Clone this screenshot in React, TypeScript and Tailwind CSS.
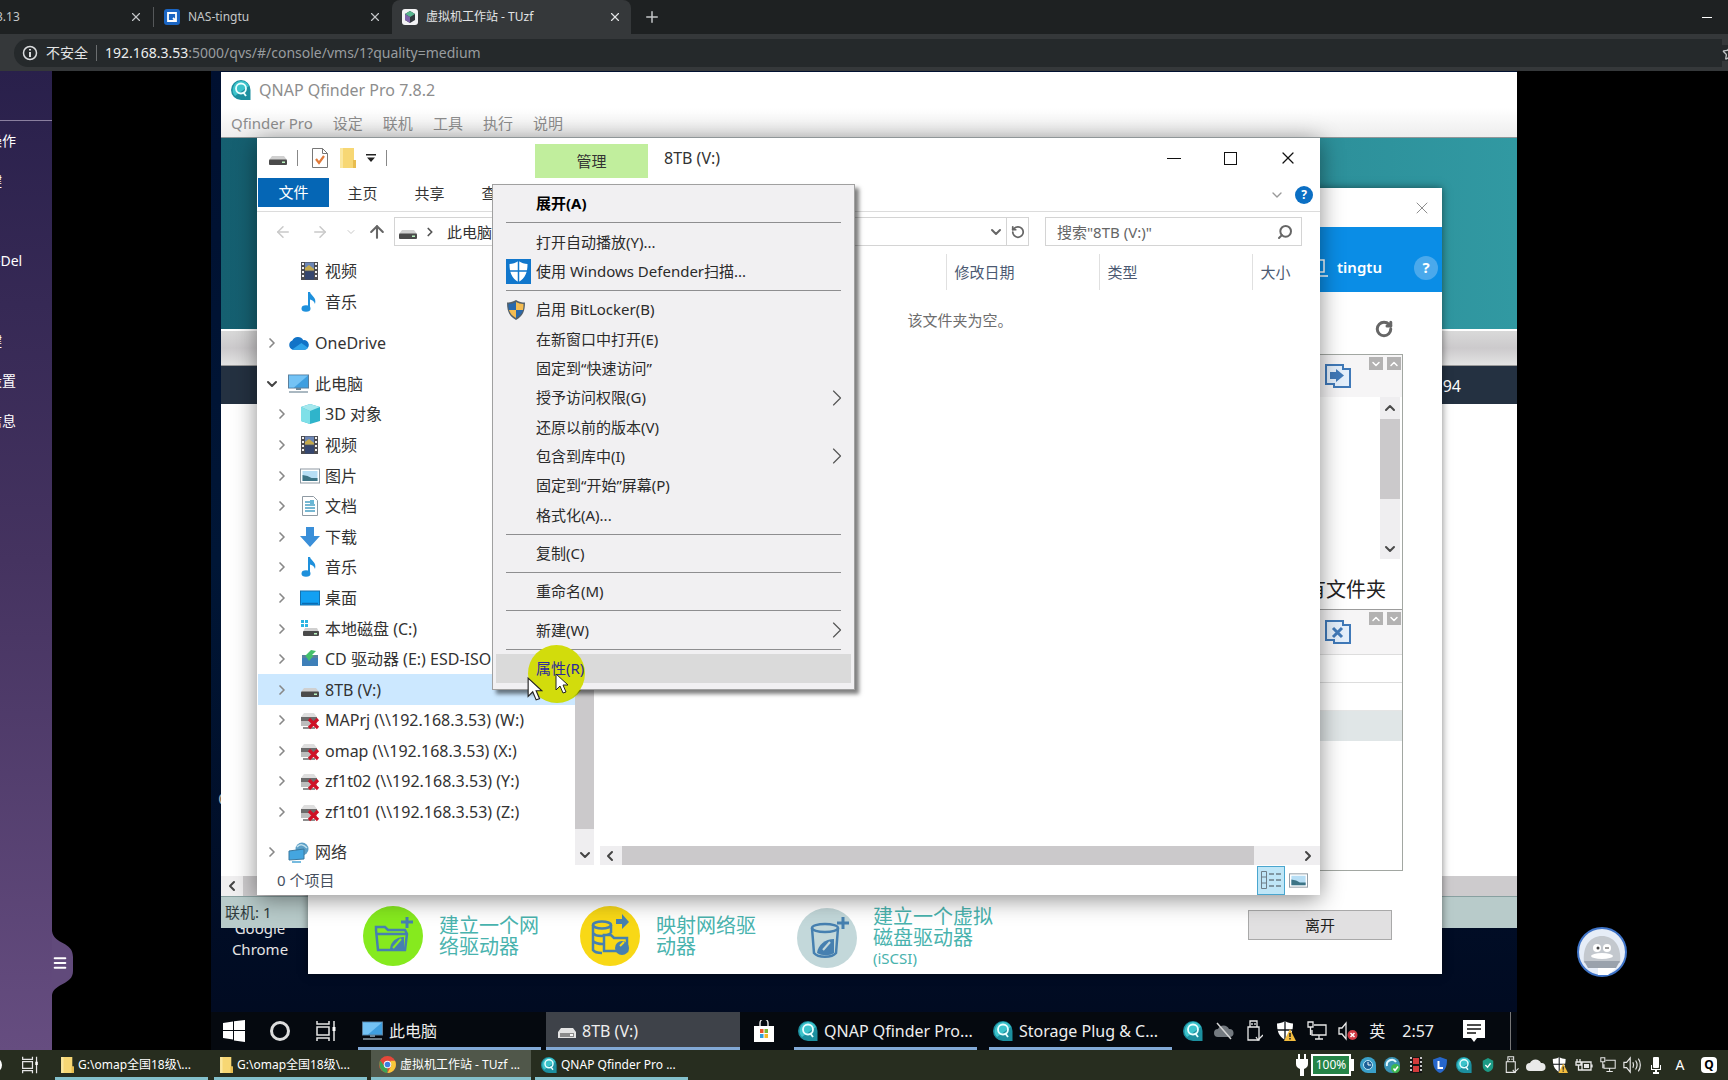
import React from "react";
import {
  ArrowLeft,
  ArrowRight,
  ArrowUp,
  ChevronDown,
  ChevronLeft,
  ChevronRight,
  ChevronUp,
  Menu,
  Plus,
  RotateCw,
  Search,
  Star,
  X,
} from "lucide-react";

type IconProps = { className?: string };

const QIcon = ({ className = "size-5" }: IconProps) => (
  <svg viewBox="0 0 20 20" className={className}>
    <path d="M10 0a10 10 0 0 1 9.500 10V20H10A10 10 0 0 1 10 0z" fill="#1c8f9f" />
    <path d="M10 1a9 9 0 0 1 8 5L4 16A9 9 0 0 1 10 1z" fill="#3cc3cb" />
    <circle cx="10" cy="8.500" r="5" fill="none" stroke="#eaffff" strokeWidth="1.800" />
    <path d="M12 12l3 4" stroke="#eaffff" strokeWidth="1.800" />
  </svg>
);

const DriveIcon = ({ className = "w-[18px] h-[18px]" }: IconProps) => (
  <svg viewBox="0 0 18 18" className={className}>
    <path d="M3 7h12l3 4H0z" fill="#d0d0d0" />
    <rect y="10.500" width="18" height="5.500" rx="1" fill="#4a4a4a" />
    <rect x="13" y="12.500" width="3" height="1.500" fill="#b9f5c0" />
  </svg>
);

const TaskDriveIcon = () => (
  <svg viewBox="0 0 18 18" className="size-[18px]">
    <path d="M3 6h12l3 4v6H0v-6z" fill="#e3e3e3" />
    <path d="M2 11h14v4H2z" fill="#8b8b8b" />
    <path d="M12 12h3v2h-3z" fill="#f5f5f5" />
  </svg>
);

const NetDriveIcon = () => (
  <svg viewBox="0 0 20 20" className="size-5">
    <path d="M4 3h10l3 4H1z" fill="#dedede" />
    <rect x="1" y="7" width="16" height="4" fill="#6b6b6b" />
    <rect x="1" y="11" width="16" height="5" fill="#bdbdbd" />
    <path d="M3 18h12" stroke="#8d8d8d" strokeWidth="2" />
    <path d="M9 9l9 9M18 9l-9 9" stroke="#cf1126" strokeWidth="3.200" />
  </svg>
);

const SystemDriveIcon = () => (
  <svg viewBox="0 0 20 20" className="size-5">
    <path d="M1 1h3v3H1zM5 1h3v3H5zM1 5h3v3H1zM5 5h3v3H5z" fill="#2bb5e3" />
    <path d="M5 9h12l2 4H3z" fill="#d0d0d0" />
    <rect x="3" y="12" width="16" height="5" rx="1" fill="#4a4a4a" />
    <rect x="14" y="14" width="3" height="1.500" fill="#b9f5c0" />
  </svg>
);

const CdIcon = () => (
  <svg viewBox="0 0 20 20" className="size-5">
    <rect x="2" y="6" width="16" height="11" fill="#3e7fb8" />
    <rect x="2" y="6" width="16" height="3" fill="#5b7fa0" />
    <path d="M6 6l5-5 5 1-4 4h2l-5 6-4-6z" fill="#43c06b" />
  </svg>
);

const VideoIcon = () => (
  <svg viewBox="0 0 20 20" className="size-5">
    <rect x="1" y="1" width="17" height="18" fill="#4c4c50" />
    <rect x="5" y="1.500" width="9" height="8" fill="#6c86b6" />
    <rect x="5" y="10.500" width="9" height="8" fill="#35466e" />
    <path d="M5 7l4-3 5 4v1.500H5z" fill="#c4a94b" />
    <path d="M3 2v16M16 2v16" stroke="#f2f2f2" strokeWidth="2" strokeDasharray="2 2" />
  </svg>
);

const MusicIcon = () => (
  <svg viewBox="0 0 20 20" className="size-5">
    <ellipse cx="6" cy="16.500" rx="4.500" ry="3.200" fill="#1e90dc" />
    <path d="M8 17V0h2c1 4 7 5 5 12-1-3-3-4-5-4.500V17z" fill="#1e90dc" />
  </svg>
);

const CloudIcon = ({ className = "w-[21px] h-[16px]" }: IconProps) => (
  <svg viewBox="0 0 22 16" className={className}>
    <path d="M5 15a5 5 0 0 1-.5-9.500A6.500 6.500 0 0 1 16 5a5 5 0 0 1 1.500 10z" fill="#1173c7" />
    <path d="M4 15L14 8l7 5a4 4 0 0 1-3 2z" fill="#2fa4ea" />
  </svg>
);

const PcIcon = ({ className = "size-[21px]" }: IconProps) => (
  <svg viewBox="0 0 21 21" className={className}>
    <rect x=".5" y="2" width="20" height="13" fill="#3f9fe0" stroke="#5b7f9c" />
    <path d="M1 2.500h19L6 14.500H1z" fill="#74c3f5" />
    <path d="M8 15h5v2H8z" fill="#6d8799" />
    <path d="M1 19h19" stroke="#8ea0ac" strokeWidth="1.500" />
  </svg>
);

const CubeIcon = () => (
  <svg viewBox="0 0 20 20" className="size-5">
    <path d="M10 0l10 3v14l-10 3-9-3V3z" fill="#2fb4cb" />
    <path d="M1 3l9 4v13l-9-3z" fill="#7fe0e8" />
    <path d="M10 0l10 3-10 4-9-4z" fill="#a5e8ee" />
  </svg>
);

const PictureIcon = ({ className = "size-5" }: IconProps) => (
  <svg viewBox="0 0 20 20" className={className}>
    <rect x=".5" y="3" width="19" height="14" fill="#fff" stroke="#8f9aa3" />
    <rect x="2.500" y="5" width="15" height="10" fill="#b7def5" />
    <path d="M2.500 9l5 1 4 2h6v3h-15z" fill="#3d7486" />
  </svg>
);

const DocIcon = () => (
  <svg viewBox="0 0 20 20" className="size-5">
    <path d="M2.500.5h11l4 4v15h-15z" fill="#fff" stroke="#8f9aa3" />
    <path d="M5 6h6M5 9h10M5 12h10M5 15h10" stroke="#4aa0c4" strokeWidth="1.500" />
    <rect x="10" y="4" width="4" height="4" fill="#69b7d6" />
  </svg>
);

const DownIcon = () => (
  <svg viewBox="0 0 20 20" className="size-5">
    <path d="M6 0h8v9h6L10 20 0 9h6z" fill="#3a8fd9" />
  </svg>
);

const DesktopIcon = () => (
  <svg viewBox="0 0 20 20" className="size-5">
    <rect x=".5" y="3" width="19" height="14" fill="#12a0f2" stroke="#1671ad" />
    <path d="M2 15.500h16" stroke="#0b6cb3" strokeWidth="1.500" />
  </svg>
);

const NetworkIcon = () => (
  <svg viewBox="0 0 21 21" className="size-[21px]">
    <circle cx="14" cy="7" r="6.500" fill="#5c9fc6" />
    <path d="M9 5c3-4 7-2 10 1" stroke="#bfe0ee" strokeWidth="1.500" fill="none" />
    <path d="M1 9l15-2v10l-15 1z" fill="#44a6e0" stroke="#3b789e" />
    <path d="M4 20h9" stroke="#4aa4d5" strokeWidth="1.500" />
  </svg>
);

const FolderIcon = ({ className = "w-[16px] h-[20px]" }: IconProps) => (
  <svg viewBox="0 0 16 20" className={className}>
    <path d="M0 0h14v12h2v8H0z" fill="#f7d774" />
    <path d="M0 0h3v20H0z" fill="#fbe79e" />
    <path d="M13 12h3v8h-3z" fill="#e8bd4f" />
  </svg>
);

const CheckDocIcon = () => (
  <svg viewBox="0 0 16 20" className="w-4 h-5">
    <path d="M.5.500h10l5 5v14H.5z" fill="#fff" stroke="#777" />
    <path d="M10.500.500v5h5" fill="none" stroke="#777" />
    <path d="M4 11l3 4 5-7" fill="none" stroke="#e07a3a" strokeWidth="2.200" />
  </svg>
);

const DefenderIcon = () => (
  <svg viewBox="0 0 25 25" className="size-[25px]">
    <rect width="25" height="25" fill="#1177cc" />
    <path d="M12.500 2c3 2 6 3 9 3 0 8-2 14-9 18-7-4-9-10-9-18 3 0 6-1 9-3z" fill="#fff" />
    <path d="M12.500 2v21M3 12h19" stroke="#1177cc" strokeWidth="1.500" />
  </svg>
);

const BitlockerIcon = () => (
  <svg viewBox="0 0 20 20" className="size-5">
    <path d="M10 0c3 2 6 2.500 9 2.500C19 11 17 16 10 20 3 16 1 11 1 2.500 4 2.500 7 2 10 0z" fill="#53606b" />
    <path d="M10 2v8H3C2.500 8 2.500 6 2.500 4 5 4 8 3 10 2z" fill="#2968ab" />
    <path d="M10 2v8h7c.5-2 .5-4 .5-6C15 4 12 3 10 2z" fill="#f4bc52" />
    <path d="M10 10v8c-4-2-6-5-7-8z" fill="#f4bc52" />
    <path d="M10 10v8c4-2 6-5 7-8z" fill="#2968ab" />
  </svg>
);

const TaskViewIcon = ({ className = "size-[22px]" }: IconProps) => (
  <svg viewBox="0 0 22 22" className={className} fill="none" stroke="#e6e6e6" strokeWidth="1.500">
    <path d="M2 1v3h12V1M2 21v-3h12v3M2 7h12v8H2zM19 1v20" />
    <rect x="17.500" y="7" width="3" height="4" fill="#fff" stroke="none" />
  </svg>
);

const UsbIcon = ({ className = "w-4 h-[22px]" }: IconProps) => (
  <svg viewBox="0 0 16 22" className={className} fill="none" stroke="#e8e8e8" strokeWidth="1.300">
    <path d="M3 7V1h7v6M1 7h11v13H1zM5 3v2M8 3v2" />
    <path d="M9 17l2 3 5-5" />
  </svg>
);

const ShieldWarnIcon = ({ className = "size-5" }: IconProps) => (
  <svg viewBox="0 0 20 20" className={className}>
    <path d="M9 0c3 2 5 2 8 2.500 0 8-2 13-8 16.500C3 15.500 1 10.500 1 2.500 4 2 6 2 9 0z" fill="#fff" />
    <path d="M9 0v19M1 9h16" stroke="#10151a" strokeWidth="1.300" />
    <path d="M14 8l6 12H8z" fill="#f3bc3d" />
    <path d="M14 12v4M14 17v1.500" stroke="#222" strokeWidth="1.500" />
  </svg>
);

const LanIcon = ({ className = "size-5" }: IconProps) => (
  <svg viewBox="0 0 20 20" className={className} fill="none" stroke="#e8e8e8" strokeWidth="1.300">
    <path d="M7 4h12v10H5V9M12 14v4M8 18h8M1 1h5v5H1zM3.500 6v8" />
  </svg>
);

const SpeakerIcon = ({ muted = false }: { muted?: boolean }) => (
  <svg viewBox="0 0 20 20" className={muted ? "size-5" : "size-[18px]"} fill="none" stroke="#e8e8e8" strokeWidth="1.300">
    <path d="M1 7h3l4-5v16l-4-5H1z" />
    {muted ? (
      <>
        <circle cx="14.500" cy="14" r="5" fill="#cf3b45" stroke="none" />
        <path d="M12.500 12l4 4M16.500 12l-4 4" stroke="#fff" strokeWidth="1.500" />
      </>
    ) : (
      <path d="M11 7c1 2 1 4 0 6M14 5c2 3 2 7 0 10M17 3c3 4 3 10 0 14" />
    )}
  </svg>
);

const GreyCloudIcon = ({ off = false }: { off?: boolean }) => (
  <svg viewBox="0 0 20 18" className="w-5 h-[18px]">
    <path
      d="M4 15a4 4 0 0 1 0-8 6 6 0 0 1 11 0 4 4 0 0 1 1 8z"
      fill={off ? "#747a80" : "#e9e9e9"}
    />
    {off && <path d="M3 1l14 16" stroke="#d5d5d5" strokeWidth="1.500" />}
  </svg>
);

const ChromeIcon = () => (
  <svg viewBox="0 0 18 18" className="size-[17px]">
    <circle cx="9" cy="9" r="9" fill="#e4483a" />
    <path d="M1 5l6 11a9 9 0 0 1-6-11z" fill="#3da455" />
    <path d="M9 18A9 9 0 0 1 1.500 5L6 11l3 2z" fill="#3da455" />
    <path d="M17 5a9 9 0 0 1-8 13l4-8-1-5z" fill="#f6c83b" />
    <circle cx="9" cy="9" r="4" fill="#fff" />
    <circle cx="9" cy="9" r="3" fill="#3f7fe0" />
  </svg>
);

const PointerIcon = ({ className = "" }: IconProps) => (
  <svg viewBox="0 0 14 21" className={className}>
    <path d="M1 1v16l4-4 3 7 3-1-3-7h5z" fill="#fff" stroke="#222" strokeWidth="1" />
  </svg>
);

// folder sync glyphs in the storage window
const FrameIcon = ({ kind }: { kind: "arrow" | "cross" }) => (
  <svg viewBox="0 0 26 24" className="w-[26px] h-6" fill="none" stroke="#4079b8" strokeWidth="2">
    <path d="M1 1h17v4h7v18H9v-3H1z" fill="#e4effb" />
    {kind === "arrow" ? (
      <path d="M5 8h6V5l8 6.500L11 18v-3H5z" fill="#4079b8" stroke="none" />
    ) : (
      <path d="M8 8l9 9M17 8l-9 9" strokeWidth="3" />
    )}
  </svg>
);

const ActionGlyph = ({ kind }: { kind: "folder" | "map" | "disk" }) => (
  <svg viewBox="0 0 60 60" className="size-[60px]" fill="none" stroke="#4680b0" strokeWidth="2.500">
    {kind === "folder" && (
      <>
        <path d="M15 44l-2-20V21h9l3 3h17l2 4-2 16zM13 28h31" />
        <path d="M41 31v12H27a13 13 0 0 1 14-12z" fill="#4680b0" stroke="none" />
        <path d="M30 42l8-9" stroke="#86ea1e" strokeWidth="2" />
        <path d="M44 11v11M38 16h12" strokeWidth="3" />
      </>
    )}
    {kind === "map" && (
      <>
        <ellipse cx="22" cy="19" rx="9" ry="3.500" />
        <path d="M13 19v25c2 3 6 3 9 3M31 19v8M13 27c3 4 13 4 18 0M13 35c3 3 6 3 10 3" />
        <path d="M24 45V29h7l3 3h13v13z" fill="#f8d816" />
        <circle cx="42" cy="42" r="7" fill="#4680b0" stroke="none" />
        <path d="M40 40l4-4" stroke="#f8d816" strokeWidth="2" />
        <path d="M36 13h6V8l7 8-7 7v-5h-6z" fill="#4680b0" stroke="none" />
      </>
    )}
    {kind === "disk" && (
      <>
        <ellipse cx="28" cy="20" rx="13" ry="4" />
        <path d="M15 20l2 25c4 5 18 5 22 0l2-25" />
        <path d="M37 31v14c-4 3-12 3-17 0 1-8 8-14 17-14z" fill="#4680b0" stroke="none" />
        <path d="M26 42l7-8" stroke="#c3d8da" strokeWidth="2" />
        <path d="M46 9v12M40 15h12" strokeWidth="3" />
      </>
    )}
  </svg>
);

const consoleItems = ["操作", "键", "", "-Del", "", "键", "设置", "信息"];

const driveTree = [
  { label: "3D 对象", icon: <CubeIcon /> },
  { label: "视频", icon: <VideoIcon /> },
  { label: "图片", icon: <PictureIcon /> },
  { label: "文档", icon: <DocIcon /> },
  { label: "下载", icon: <DownIcon /> },
  { label: "音乐", icon: <MusicIcon /> },
  { label: "桌面", icon: <DesktopIcon /> },
  { label: "本地磁盘 (C:)", icon: <SystemDriveIcon /> },
  { label: "CD 驱动器 (E:) ESD-ISO", icon: <CdIcon /> },
  { label: "8TB (V:)", icon: <DriveIcon />, selected: true },
  { label: "MAPrj (\\\\192.168.3.53) (W:)", icon: <NetDriveIcon /> },
  { label: "omap (\\\\192.168.3.53) (X:)", icon: <NetDriveIcon /> },
  { label: "zf1t02 (\\\\192.168.3.53) (Y:)", icon: <NetDriveIcon /> },
  { label: "zf1t01 (\\\\192.168.3.53) (Z:)", icon: <NetDriveIcon /> },
];

type MenuEntry = {
  label: string;
  icon?: React.ReactNode;
  arrow?: boolean;
  bold?: boolean;
  active?: boolean;
};

const menuGroups: MenuEntry[][] = [
  [{ label: "展开(A)", bold: true }],
  [
    { label: "打开自动播放(Y)..." },
    { label: "使用 Windows Defender扫描...", icon: <DefenderIcon /> },
  ],
  [
    { label: "启用 BitLocker(B)", icon: <BitlockerIcon /> },
    { label: "在新窗口中打开(E)" },
    { label: "固定到“快速访问”" },
    { label: "授予访问权限(G)", arrow: true },
    { label: "还原以前的版本(V)" },
    { label: "包含到库中(I)", arrow: true },
    { label: "固定到“开始”屏幕(P)" },
    { label: "格式化(A)..." },
  ],
  [{ label: "复制(C)" }],
  [{ label: "重命名(M)" }],
  [{ label: "新建(W)", arrow: true }],
  [{ label: "属性(R)", active: true }],
];

const BrowserTop = () => (
  <header className="shrink-0 bg-[#35383a] text-[#c3c6c8]">
    <div className="flex h-[34px] items-center bg-[#1e2122] text-xs">
      <div className="flex h-full w-[153px] items-center justify-between">
        <span className="-ml-1">3.13</span>
        <button aria-label="关闭" className="mr-2.5">
          <X className="size-3.5" />
        </button>
      </div>
      <div className="flex h-full w-[239px] items-center">
        <span className="h-5 w-px bg-[#55585a]" />
        <svg viewBox="0 0 16 16" className="ml-2.5 size-4">
          <rect width="16" height="16" rx="3" fill="#1b66c4" />
          <path d="M4 4h8v8H4zM9 9l3 3" fill="none" stroke="#fff" strokeWidth="1.800" />
        </svg>
        <span className="ml-2">NAS-tingtu</span>
        <button aria-label="关闭" className="mr-2.5 ml-auto">
          <X className="size-3.5" />
        </button>
      </div>
      <div className="flex h-full w-[239px] items-center rounded-t-lg bg-[#35383a] text-[#e3e5e6]">
        <svg viewBox="0 0 16 16" className="ml-[10px] size-4">
          <rect width="16" height="16" rx="3" fill="#f3f3f5" />
          <path d="M8 2l5 3v6l-5 3-5-3V5z" fill="#32373d" />
          <path d="M8 2l5 3-5 3-5-3z" fill="#58b68f" />
          <path d="M3 5l5 3v6l-5-3z" fill="#7d63a8" />
        </svg>
        <span className="ml-2">虚拟机工作站 - TUzf</span>
        <button aria-label="关闭" className="mr-[9px] ml-auto">
          <X className="size-3.5" />
        </button>
      </div>
      <button aria-label="新标签页" className="ml-3">
        <Plus className="size-[18px]" />
      </button>
      <button aria-label="最小化" className="mr-4 ml-auto h-px w-2.5 bg-white" />
    </div>
    <div className="flex h-[37px] items-center overflow-hidden">
      <div className="ml-3.5 flex h-7 flex-1 items-center rounded-l-full bg-[#25292b] pl-2 text-sm">
        <svg viewBox="0 0 16 16" className="size-4" fill="none" stroke="#dadcde" strokeWidth="1.500">
          <circle cx="8" cy="8" r="6.500" />
          <path d="M8 7v5M8 4v1.500" strokeWidth="2" />
        </svg>
        <span className="ml-2 text-[#e3e5e6]">不安全</span>
        <span className="mx-2 h-4 w-px bg-[#6b6e70]" />
        <a href="#console" className="text-[#989c9f]">
          <span className="text-[#eceeef]">192.168.3.53</span>:5000/qvs/#/console/vms/1?quality=medium
        </a>
      </div>
      <button aria-label="收藏" className="-mr-2.5 bg-[#25292b]">
        <Star className="size-4" />
      </button>
    </div>
  </header>
);

const ConsoleSidebar = () => (
  <aside className="relative w-[52px] shrink-0 bg-linear-to-b from-[#29204b] via-[#453360] to-[#664d80] text-sm text-white">
    <div className="h-[50px] border-b border-[#8a7f9f]" />
    <nav className="flex flex-col overflow-hidden">
      {consoleItems.map((item, i) => (
        <a
          key={i}
          href="#console"
          className={`flex h-10 items-center whitespace-nowrap ${item === "-Del" ? "-ml-1" : "-ml-3"}`}
        >
          {item}
        </a>
      ))}
    </nav>
    <button aria-label="展开菜单" className="absolute top-[860px] left-[52px] h-16 w-[22px]">
      <svg viewBox="0 0 22 64" className="absolute inset-0 h-16 w-[22px]">
        <path d="M0 0c2 14 21 10 21 26v14c0 14-19 12-21 24z" fill="#614a7b" />
      </svg>
      <Menu className="relative size-4 text-white" strokeWidth={3} />
    </button>
  </aside>
);

const QfinderWindow = () => (
  <section className="absolute top-px right-0 left-[10px] flex h-[856px] flex-col bg-white text-[15px] text-[#8d8d8d]">
    <div className="flex h-9 items-center gap-2 pl-2.5 text-base">
      <QIcon className="size-5" />
      <span>QNAP Qfinder Pro 7.8.2</span>
    </div>
    <nav className="flex h-[30px] items-center gap-5 border-b border-[#8f9698] bg-linear-to-b from-white to-[#ededed] pt-0.5 pl-2.5">
      <button>Qfinder Pro</button>
      <button>设定</button>
      <button>联机</button>
      <button>工具</button>
      <button>执行</button>
      <button>说明</button>
    </nav>
    <div className="h-[193px] border-b-2 border-white bg-linear-to-r from-[#155f70] to-[#3199a2]" />
    <div className="h-[35px] border-b border-[#9a9a9a] bg-linear-to-b from-[#d9d9d9] via-[#cccacc] to-[#e3e3e3]" />
    <div className="flex h-[38px] items-center justify-end bg-[#243141] pt-0.5 pr-14 text-base text-white">94</div>
    <div className="flex-1 bg-white" />
    <div className="flex h-5 bg-[#cdcbcd]">
      <button aria-label="向左" className="flex w-[22px] items-center justify-center bg-[#f0eff0]">
        <ChevronLeft className="size-4 text-[#444]" strokeWidth={3} />
      </button>
    </div>
    <div className="flex h-8 items-center border-t border-[#88a0a0] bg-[#b8cbca] pl-1 text-[#2f3b3d]">联机: 1</div>
  </section>
);

const MiniButton = ({ up = false }: { up?: boolean }) => (
  <button aria-label={up ? "收起" : "展开"} className="flex h-[13px] w-3.5 items-center justify-center bg-[#b3b2b2] text-white">
    {up ? <ChevronUp className="size-3" strokeWidth={3} /> : <ChevronDown className="size-3" strokeWidth={3} />}
  </button>
);

const StorageWindow = () => (
  <section className="absolute top-[117px] left-[97px] flex h-[786px] w-[1134px] flex-col bg-white shadow-[0_0_8px_rgba(0,0,0,0.5)]">
    <div className="flex h-[39px] items-center justify-end pr-2.5">
      <button aria-label="关闭">
        <X className="size-5 text-[#777]" strokeWidth={1} />
      </button>
    </div>
    <div className="flex h-[65px] items-center justify-end bg-[#0a8de6] pt-4 pr-1 text-[15px] text-white">
      <svg viewBox="0 0 20 20" className="mr-2 size-5" fill="none" stroke="#fff" strokeWidth="1.500">
        <path d="M2 2h13v12H2zM6 18h13" />
      </svg>
      <span className="font-semibold">tingtu</span>
      <button aria-label="帮助" className="ml-8 size-6 rounded-full bg-[#4aa9ec] font-bold">
        ?
      </button>
    </div>
    <div className="flex h-[62px] items-center justify-end pt-3 pr-[49px]">
      <button aria-label="刷新">
        <RotateCw className="size-[18px] text-[#666]" strokeWidth={4} />
      </button>
    </div>
    <div className="mr-[39px] ml-9 flex h-[517px] flex-col border border-[#a2a7a2]">
      <div className="flex h-[42px] items-start justify-end gap-1 bg-[#f6f5f6] pt-0.5 pr-px">
        <span className="mt-[7px] mr-3.5">
          <FrameIcon kind="arrow" />
        </span>
        <MiniButton />
        <MiniButton up />
      </div>
      <div className="flex h-[162px] justify-end pr-0.5">
        <div className="flex w-5 flex-col items-center bg-[#efeef0] text-[#4a4a4a]">
          <ChevronUp className="h-[22px] w-4" strokeWidth={3} />
          <span className="h-20 w-full bg-[#cbc9cb]" />
          <ChevronDown className="mt-auto mb-0.5 size-4" strokeWidth={3} />
        </div>
      </div>
      <div className="flex h-[50px] items-center justify-end pt-3 pr-4 text-xl text-[#222]">所有文件夹</div>
      <div className="flex h-[46px] items-start justify-end gap-1 border-t border-b border-t-[#9c9c9c] border-b-[#ddd] bg-[#f6f5f6] pt-0.5 pr-px">
        <span className="mt-2 mr-3.5">
          <FrameIcon kind="cross" />
        </span>
        <MiniButton up />
        <MiniButton />
      </div>
      <div className="h-7 border-b border-[#ddd]" />
      <div className="h-7 border-b border-[#e5e5e5]" />
      <div className="h-[30px] bg-[#e0e6e7]" />
    </div>
    <div className="flex flex-1 items-start pt-[35px] pr-[50px] pl-[55px] text-xl leading-[21px] text-[#49b3ae]">
      <button className="flex w-[217px] items-center gap-4 text-left">
        <span className="rounded-full bg-[#86ea1e]">
          <ActionGlyph kind="folder" />
        </span>
        <span className="w-[105px]">建立一个网络驱动器</span>
      </button>
      <button className="flex w-[217px] items-center gap-4 text-left">
        <span className="rounded-full bg-[#f8d816]">
          <ActionGlyph kind="map" />
        </span>
        <span className="w-[105px]">映射网络驱动器</span>
      </button>
      <button className="flex items-center gap-4 text-left">
        <span className="rounded-full bg-[#c3d8da]">
          <ActionGlyph kind="disk" />
        </span>
        <span className="w-[125px]">
          建立一个虚拟磁盘驱动器
          <span className="block text-[15px]">(iSCSI)</span>
        </span>
      </button>
      <button className="mt-1 ml-auto h-[30px] w-36 border border-[#a9a9a9] bg-[#e1e0e1] text-[15px] text-[#222]">
        离开
      </button>
    </div>
  </section>
);

const ExplorerTree = () => (
  <nav className="flex w-[318px] flex-col pt-1 pl-px text-base">
    <div className="flex h-[61px] flex-col pl-[42px]">
      <button className="flex flex-1 items-center gap-[5px]">
        <VideoIcon />
        视频
      </button>
      <button className="flex flex-1 items-center gap-[5px]">
        <MusicIcon />
        音乐
      </button>
    </div>
    <button className="mt-[10px] flex h-[31px] items-center pl-1.5">
      <ChevronRight className="mr-2 size-4 text-[#888]" strokeWidth={2.5} />
      <CloudIcon />
      <span className="ml-1.5">OneDrive</span>
    </button>
    <button className="mt-[10px] flex h-[31px] items-center pl-1.5">
      <ChevronDown className="mr-2 size-4 text-[#444]" strokeWidth={3} />
      <PcIcon />
      <span className="ml-1.5">此电脑</span>
    </button>
    <div className="flex h-[428px] flex-col">
      {driveTree.map((item, i) => (
        <button
          key={i}
          className={`flex flex-1 items-center overflow-hidden pl-4 whitespace-nowrap ${
            item.selected ? "bg-[#cce8ff]" : ""
          }`}
        >
          <ChevronRight className="mr-2.5 size-4 shrink-0 text-[#888]" strokeWidth={2.5} />
          <span className="flex w-5 shrink-0 justify-center">{item.icon}</span>
          <span className="ml-[5px]">{item.label}</span>
        </button>
      ))}
    </div>
    <button className="mt-3 flex h-[26px] items-center pl-1.5">
      <ChevronRight className="mr-2 size-4 text-[#888]" strokeWidth={2.5} />
      <NetworkIcon />
      <span className="ml-1.5">网络</span>
    </button>
  </nav>
);

const ExplorerWindow = () => (
  <section className="absolute top-[66px] left-[46px] flex h-[758px] w-[1063px] flex-col border-t border-[#8f9698] bg-white text-[15px] text-[#333] shadow-[0_4px_22px_rgba(0,0,0,0.45)]">
    <div className="flex h-10 items-center">
      <div className="flex w-[278px] items-center pl-3">
        <DriveIcon />
        <span className="ml-2.5 h-4 w-px bg-[#888]" />
        <span className="ml-3.5">
          <CheckDocIcon />
        </span>
        <span className="ml-3">
          <FolderIcon />
        </span>
        <svg viewBox="0 0 10 10" className="ml-2.5 size-2.5" fill="#222">
          <path d="M0 1h10v1.500H0zM1 4.500h8L5 9z" />
        </svg>
        <span className="ml-2.5 h-4 w-px bg-[#888]" />
      </div>
      <div className="mt-1.5 flex h-[34px] w-[113px] items-center justify-center bg-[#c1ee9d]">管理</div>
      <h1 className="ml-4 text-base">8TB (V:)</h1>
      <div className="ml-auto flex h-full items-center pr-1 text-[#111]">
        <button aria-label="最小化" className="flex w-[57px] justify-center">
          <span className="h-px w-3.5 bg-[#111]" />
        </button>
        <button aria-label="最大化" className="flex w-[57px] justify-center">
          <span className="size-[13px] border border-[#111]" />
        </button>
        <button aria-label="关闭" className="flex w-[57px] justify-center">
          <X className="size-5" strokeWidth={1.5} />
        </button>
      </div>
    </div>
    <div className="flex h-[35px] items-start border-b border-[#dcdcdc]">
      <button className="ml-px h-[29px] w-[71px] bg-[#0566b5] text-white">文件</button>
      <button className="h-[30px] w-[67px]">主页</button>
      <button className="h-[30px] w-[67px]">共享</button>
      <button className="h-[30px] w-[67px]">查看</button>
      <div className="mt-2 mr-[7px] ml-auto flex items-center gap-2.5">
        <ChevronDown className="size-4 text-[#999]" />
        <button aria-label="帮助" className="size-[18px] rounded-full bg-[#0b6fc4] text-xs font-bold text-white">
          ?
        </button>
      </div>
    </div>
    <div className="flex h-[42px] items-center pr-[18px]">
      <div className="flex w-[137px] items-center pl-[17px] text-[#c9c9c9]">
        <ArrowLeft className="size-[18px]" />
        <ArrowRight className="ml-[19px] size-[18px]" />
        <ChevronDown className="ml-4 size-3" />
        <ArrowUp className="ml-2.5 size-5 text-[#666]" strokeWidth={2.5} />
      </div>
      <div className="flex h-[29px] flex-1 items-center border border-[#d4d4d4] pl-1">
        <DriveIcon />
        <ChevronRight className="mx-1.5 size-3.5 text-[#555]" strokeWidth={3} />
        <span className="ml-1">此电脑</span>
        <ChevronDown className="mr-0.5 ml-auto size-4 text-[#666]" strokeWidth={3} />
        <button aria-label="刷新" className="flex h-full w-[22px] items-center justify-center border-l border-[#d4d4d4]">
          <RotateCw className="size-3.5 -scale-x-100 text-[#666]" strokeWidth={3} />
        </button>
      </div>
      <div className="ml-4 flex h-[29px] w-[257px] items-center border border-[#d4d4d4] pr-2 pl-[11px]">
        <input
          type="text"
          aria-label="搜索"
          defaultValue={'搜索"8TB (V:)"'}
          className="min-w-0 flex-1 bg-transparent text-[15px] text-[#666] outline-none"
        />
        <Search className="size-4 -scale-x-100 text-[#666]" strokeWidth={3} />
      </div>
    </div>
    <div className="flex flex-1">
      <ExplorerTree />
      <div className="flex w-[19px] flex-col items-center bg-[#efeef0]">
        <span className="w-full flex-1 bg-[#cbc9cb]" />
        <ChevronDown className="h-9 w-4 pt-4 text-[#444]" strokeWidth={3} />
      </div>
      <div className="flex flex-1 flex-col pt-0.5 pl-1.5">
        <table className="w-full table-fixed text-left text-[#4c5a72]">
          <thead>
            <tr className="h-9">
              <th aria-label="名称" />
              <th className="w-[153px] border-l border-[#e0e0e0] pl-2 font-normal">修改日期</th>
              <th className="w-[153px] border-l border-[#e0e0e0] pl-2 font-normal">类型</th>
              <th className="w-[68px] border-l border-[#e0e0e0] pl-2 font-normal">大小</th>
            </tr>
          </thead>
          <tbody>
            <tr className="h-[60px]">
              <td colSpan={4} className="text-center text-[#6d6d6d]">
                该文件夹为空。
              </td>
            </tr>
          </tbody>
        </table>
        <div className="mt-auto flex h-[19px] items-center bg-[#efeef0] text-[#444]">
          <ChevronLeft className="mx-0.5 size-4" strokeWidth={3} />
          <span className="ml-0.5 h-full flex-1 bg-[#cbc9cb]" />
          <ChevronRight className="mr-1 ml-[46px] size-4" strokeWidth={3} />
        </div>
      </div>
    </div>
    <div className="flex h-[31px] items-center pr-3 pl-5 text-[#46505f]">
      <span>0 个项目</span>
      <button aria-label="详细信息" className="mr-1 ml-auto flex h-[29px] w-7 items-center justify-center border border-[#4aa6cf] bg-[#bfe6f7]">
        <svg viewBox="0 0 20 18" className="w-5 h-[18px]" fill="none" stroke="#6e7f88">
          <path d="M.5.500h5v17h-5zM.5 6h5M.5 12h5" />
          <path d="M8 3h5M15 3h5M8 9h5M15 9h5M8 15h5M15 15h5" strokeWidth="1.500" />
        </svg>
      </button>
      <button aria-label="大图标">
        <PictureIcon className="size-[19px]" />
      </button>
    </div>
  </section>
);

const ContextMenu = () => (
  <div className="absolute top-[113px] left-[281px] flex h-[506px] w-[363px] flex-col border border-[#a0a0a0] bg-[#f1f0f2] px-[3px] pt-1 pb-1.5 text-[15px] text-[#2b2b2b] shadow-[4px_4px_4px_rgba(0,0,0,0.5)]">
    {menuGroups.map((group, g) => (
      <React.Fragment key={g}>
        {g > 0 && (
          <div className="flex h-[9px] items-center px-2.5">
            <span className="h-px w-full bg-[#8e8e90]" />
          </div>
        )}
        {group.map((item) => (
          <button
            key={item.label}
            className={`relative isolate flex flex-1 items-center pr-2 pl-2.5 ${item.active ? "bg-[#dadada]" : ""}`}
          >
            {item.active && (
              <span className="absolute top-[-9px] left-8 -z-10 size-[57px] rounded-full bg-[#d2dc0c]" />
            )}
            <span className="flex w-[30px]">{item.icon}</span>
            <span className={item.bold ? "font-bold text-black" : item.active ? "text-[#2c2a9c]" : ""}>
              {item.label}
            </span>
            {item.arrow && <ChevronRight className="ml-auto -mr-2 size-7 text-[#555]" strokeWidth={1} />}
          </button>
        ))}
      </React.Fragment>
    ))}
  </div>
);

const TaskButton = ({ icon, label }: { icon: React.ReactNode; label: string }) => (
  <button className="flex h-full w-[183px] items-center gap-1.5 border-b-3 border-[#82a9d6] pt-0.5 pl-1 whitespace-nowrap">
    {icon}
    {label}
  </button>
);

const VmTaskbar = () => (
  <footer className="absolute inset-x-0 bottom-0 flex h-[38px] items-center bg-[#05090f] text-base text-[#eee]">
    <div className="flex w-[147px] items-center pl-3">
      <svg viewBox="0 0 22 22" className="size-[22px]" fill="#fff">
        <path d="M0 3l10-1.500V10H0zM11 1.300L22 0v10H11zM0 11h10v8.500L0 18zM11 11h11v11l-11-1.500z" />
      </svg>
      <span className="ml-[25px] size-5 rounded-full border-[3px] border-[#ddd]" />
      <TaskViewIcon className="ml-[25px] size-[22px]" />
    </div>
    <TaskButton icon={<PcIcon />} label="此电脑" />
    <span className="w-[5px]" />
    <button className="flex h-full w-[194px] items-center gap-1.5 border-b-3 border-[#82a9d6] bg-[#3e4249] pt-0.5 pl-3">
      <TaskDriveIcon />
      8TB (V:)
    </button>
    <svg viewBox="0 0 20 22" className="mx-[14px] h-[22px] w-5">
      <path d="M6 7V3a4 4 0 0 1 8 0v4" fill="none" stroke="#ddd" strokeWidth="1.500" />
      <path d="M0 6h20v16H0z" fill="#fff" />
      <path d="M6 9h3.500v4H6z" fill="#e8552d" />
      <path d="M10.500 9H14v4h-3.500z" fill="#7cb636" />
      <path d="M6 14h3.500v4H6z" fill="#2f9fe0" />
      <path d="M10.500 14H14v4h-3.500z" fill="#f5b92a" />
    </svg>
    <span className="w-1.5" />
    <TaskButton icon={<QIcon />} label="QNAP Qfinder Pro..." />
    <span className="w-3" />
    <TaskButton icon={<QIcon />} label="Storage Plug & C..." />
    <div className="ml-auto flex h-full items-center gap-[11px] pr-1.5">
      <QIcon />
      <GreyCloudIcon off />
      <UsbIcon className="mx-0.5 h-[22px] w-4" />
      <ShieldWarnIcon />
      <LanIcon />
      <SpeakerIcon muted />
      <span>英</span>
      <time className="ml-1.5">2:57</time>
      <svg viewBox="0 0 22 22" className="ml-[18px] size-[22px]">
        <path d="M0 0h22v18h-8l-3 4-3-4H0z" fill="#fff" />
        <path d="M4 5h14M4 9h14M4 13h9" stroke="#111" strokeWidth="1.500" />
      </svg>
      <span className="ml-3.5 h-full w-px bg-[#777]" />
    </div>
  </footer>
);

const HostTask = ({ icon, label, active = false }: { icon: React.ReactNode; label: string; active?: boolean }) => (
  <button
    className={`flex h-full items-center gap-1 border-b-3 border-[#83c0cb] pt-0.5 text-xs whitespace-nowrap text-white ${
      active ? "w-40 bg-[#50574a] pl-2" : "w-[153px] pl-1.5"
    }`}
  >
    {icon}
    {label}
  </button>
);

const HostTaskbar = () => (
  <footer className="flex h-[30px] shrink-0 items-center bg-[#272d1f]">
    <span className="-ml-3.5 size-4 rounded-full border-2 border-white" />
    <TaskViewIcon className="ml-[19px] size-[18px]" />
    <div className="ml-4 flex h-full gap-1.5">
      <HostTask icon={<FolderIcon className="h-4 w-[13px]" />} label="G:\omap全国18级\..." />
      <HostTask icon={<FolderIcon className="h-4 w-[13px]" />} label="G:\omap全国18级\..." />
      <div className="-ml-0.5 flex h-full gap-1">
        <HostTask icon={<ChromeIcon />} label="虚拟机工作站 - TUzf ..." active />
        <HostTask icon={<QIcon className="size-4" />} label="QNAP Qfinder Pro ..." />
      </div>
    </div>
    <div className="mr-[11px] ml-auto flex items-center">
      <svg viewBox="0 0 14 22" className="h-[22px] w-3.5" fill="#fff">
        <path d="M3 0h2v5h4V0h2v5h2v5c0 3-2 4-4 5v7H5v-7c-2-1-4-2-4-5V5h2z" />
      </svg>
      <span className="ml-0.5 flex h-[22px] w-10 items-center justify-center border-2 border-white bg-[#258447] text-xs text-white">
        100%
      </span>
      <span className="mr-0.5 h-3 w-[3px] bg-white" />
      <div className="flex items-center">
        <span className="flex w-6 justify-center">
          <svg viewBox="0 0 16 16" className="size-4">
            <path d="M8 0a8 8 0 0 1 8 8v8H8A8 8 0 0 1 8 0z" fill="#3aa0c9" />
            <circle cx="8" cy="8" r="4.500" fill="#1b5f96" stroke="#bfe8f5" />
            <path d="M8 5v3h3" stroke="#fff" fill="none" />
          </svg>
        </span>
        <span className="flex w-6 justify-center">
          <svg viewBox="0 0 16 16" className="size-4">
            <circle cx="8" cy="8" r="8" fill="#3a93b5" />
            <path d="M3 9a5 5 0 0 1 9-4" stroke="#e2f7ff" strokeWidth="2" fill="none" />
            <circle cx="11.500" cy="11.500" r="4.500" fill="#3eb650" />
            <path d="M9.500 11.500l1.500 2 3-4" stroke="#fff" strokeWidth="1.500" fill="none" />
          </svg>
        </span>
        <span className="flex w-6 justify-center">
          <svg viewBox="0 0 12 16" className="h-4 w-3">
            <path d="M0 0h12v16H0z" fill="#151515" />
            <path d="M3 1h6v6H3zM3 9h6v6H3z" fill="#d23b3b" />
            <path d="M1 0v16M11 0v16" stroke="#fff" strokeDasharray="2 2" strokeWidth="1.500" />
          </svg>
        </span>
        <span className="flex w-6 justify-center">
          <svg viewBox="0 0 16 16" className="size-4">
            <path d="M8 0l7 2.500C15 10 13 14 8 16 3 14 1 10 1 2.500z" fill="#2767cb" />
            <path d="M6.500 4v7H11" stroke="#fff" strokeWidth="2" fill="none" />
          </svg>
        </span>
        <span className="flex w-6 justify-center">
          <QIcon className="size-4" />
        </span>
        <span className="flex w-6 justify-center">
          <svg viewBox="0 0 16 16" className="size-3.5">
            <path d="M8 0l6 3v6c0 4-3 6-6 7-3-1-6-3-6-7V3z" fill="#1d9a85" />
            <path d="M5 8l2.500 2.500L11 6" stroke="#fff" strokeWidth="1.500" fill="none" />
          </svg>
        </span>
        <span className="flex w-6 justify-center">
          <UsbIcon className="h-[18px] w-3.5" />
        </span>
        <span className="flex w-6 justify-center">
          <GreyCloudIcon />
        </span>
        <span className="flex w-6 justify-center">
          <ShieldWarnIcon className="size-4" />
        </span>
        <span className="flex w-6 justify-center">
          <svg viewBox="0 0 18 14" className="h-3.5 w-[18px]" fill="none" stroke="#e8e8e8" strokeWidth="1.300">
            <path d="M2 1v3M5 1v3M1 4h5v3H1zM3.500 7v5H7M7 4h9v8H7zM17 6.500v3" />
            <path d="M9 6h5v4H9z" fill="#e8e8e8" stroke="none" />
          </svg>
        </span>
        <span className="flex w-6 justify-center">
          <LanIcon className="size-4" />
        </span>
        <span className="flex w-6 justify-center">
          <SpeakerIcon />
        </span>
        <span className="flex w-6 justify-center">
          <svg viewBox="0 0 10 17" className="h-[17px] w-2.5" fill="#fff">
            <rect x="2" width="6" height="11" rx="1" />
            <path d="M0 8h1v4h8V8h1v5H6v2h2v2H2v-2h2v-2H0z" />
          </svg>
        </span>
        <span className="w-6 text-center text-sm text-white">A</span>
        <span className="ml-[9px] flex size-4 items-center justify-center rounded-sm bg-white text-xs font-bold text-black">
          Q
        </span>
      </div>
    </div>
  </footer>
);

const App = () => {
  return (
    <div className="flex h-screen flex-col overflow-hidden bg-black font-['Noto_Sans','Noto_Sans_CJK_SC',sans-serif]">
      <BrowserTop />
      <main className="relative flex min-h-0 flex-1">
        <ConsoleSidebar />
        <div className="flex flex-1 justify-center overflow-hidden pr-[52px]">
          <div className="relative w-[1306px] shrink-0 overflow-hidden bg-linear-to-b from-[#001030] via-[#001636] to-[#010a20]">
            <div className="absolute top-[716px] left-[7px] text-base text-[#aaa]">C</div>
            <div className="absolute top-[847px] left-[5px] w-[88px] text-center text-[15px] leading-[21px] text-[#e5e5e5]">
              Google Chrome
            </div>
            <QfinderWindow />
            <StorageWindow />
            <ExplorerWindow />
            <span className="absolute top-[574px] left-[317px] size-[58px] rounded-full bg-[#c8dc0e]" />
            <ContextMenu />
            <PointerIcon className="absolute top-[606px] left-[316px] h-6 w-4" />
            <PointerIcon className="absolute top-[602px] left-[344px] h-[21px] w-3.5" />
            <VmTaskbar />
          </div>
        </div>
        <button aria-label="助手" className="absolute right-[101px] bottom-[73px] size-[50px] rounded-full">
          <svg viewBox="0 0 50 50" className="size-[50px]">
            <circle cx="25" cy="25" r="24" fill="#e6edf7" stroke="#3f74c8" strokeWidth="2" />
            <path d="M7 36C5 18 14 9 25 9s20 9 18 27z" fill="#c3c8ce" />
            <path d="M7 34h36l-4 7H11z" fill="#9aa2ac" />
            <ellipse cx="20" cy="21" rx="4" ry="4" fill="#fff" />
            <ellipse cx="30" cy="21" rx="4" ry="4" fill="#fff" />
            <circle cx="21" cy="21" r="1.500" fill="#444" />
            <path d="M28 21h4" stroke="#444" />
            <ellipse cx="25" cy="29" rx="11" ry="3" fill="#fff" />
            <path d="M21 41h18l-8 7H21z" fill="#fff" />
          </svg>
        </button>
      </main>
      <HostTaskbar />
    </div>
  );
};

export default App;
